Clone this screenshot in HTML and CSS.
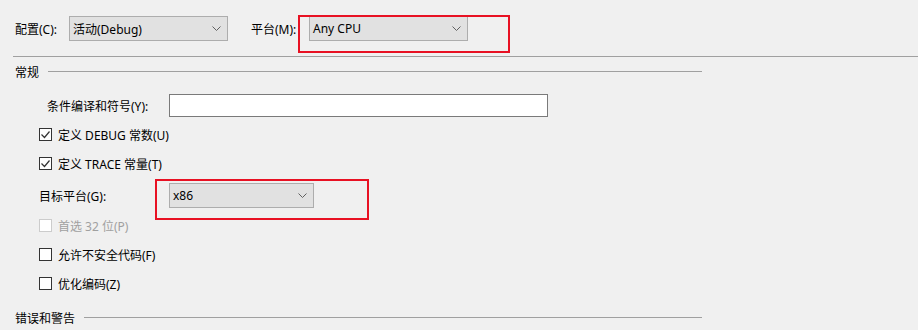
FILE: index.html
```html
<!DOCTYPE html>
<html lang="zh-CN">

<head>
    <meta charset="UTF-8">
    <title>生成</title>
    <link rel="stylesheet" href="styles.css">
</head>

<body>
    <div class="toolbar">
        <span class="label">配置(C):</span>
        <div class="combo combo-config">
            <span>活动(Debug)</span>
            <svg class="chev" width="9" height="5" viewBox="0 0 9 5"><polyline points="0.5,0.5 4.5,4.5 8.5,0.5" /></svg>
        </div>
        <span class="label label-platform">平台(M):</span>
        <div class="combo combo-platform">
            <span>Any CPU</span>
            <svg class="chev" width="9" height="5" viewBox="0 0 9 5"><polyline points="0.5,0.5 4.5,4.5 8.5,0.5" /></svg>
            <div class="mark mark-top"></div>
        </div>
    </div>

    <div class="sep"></div>

    <div class="page">
        <div class="group-title first"><span>常规</span></div>

        <div class="row row-text">
            <span class="field-label">条件编译和符号(Y):</span>
            <div class="textbox"></div>
        </div>

        <div class="row check cb1">
            <span class="box"><svg width="11" height="11" viewBox="0 0 11 11"><polyline points="1.5,5.5 4.5,8.5 9.5,2.5" /></svg></span>
            <span>定义 DEBUG 常数(U)</span>
        </div>

        <div class="row check cb2">
            <span class="box"><svg width="11" height="11" viewBox="0 0 11 11"><polyline points="1.5,5.5 4.5,8.5 9.5,2.5" /></svg></span>
            <span>定义 TRACE 常量(T)</span>
        </div>

        <div class="row row-target">
            <span class="target-label">目标平台(G):</span>
            <div class="combo combo-target">
                <span>x86</span>
                <svg class="chev" width="9" height="5" viewBox="0 0 9 5"><polyline points="0.5,0.5 4.5,4.5 8.5,0.5" /></svg>
                <div class="mark mark-target"></div>
            </div>
        </div>

        <div class="row check disabled cb3">
            <span class="box"></span>
            <span>首选 32 位(P)</span>
        </div>

        <div class="row check cb4">
            <span class="box"></span>
            <span>允许不安全代码(F)</span>
        </div>

        <div class="row check cb4">
            <span class="box"></span>
            <span>优化编码(Z)</span>
        </div>

        <div class="group-title last"><span>错误和警告</span></div>
    </div>
</body>

</html>
```

FILE: styles.css
```css
body {
    margin: 0;
    padding-top: 16px;
    background-color: #f0f0f0;
    color: #000;
    font-family: "Noto Sans", "Noto Sans CJK SC", sans-serif;
    font-size: 12px;
    overflow: hidden;
}

.toolbar {
    display: flex;
    align-items: center;
    height: 25px;
    padding-left: 15px;
}

.label {
    width: 54px;
}

.label-platform {
    margin-left: 23px;
    width: 58px;
}

.combo {
    position: relative;
    display: flex;
    align-items: center;
    justify-content: space-between;
    box-sizing: border-box;
    height: 25px;
    padding: 0 6px 0 3px;
    background-color: #e1e1e1;
    border: 1px solid #adadad;
}

.combo-config {
    width: 159px;
}

.combo-platform {
    width: 159px;
}

.combo-target {
    width: 145px;
}

.chev {
    fill: none;
    stroke: #606060;
    stroke-width: 1;
}

/* red annotation frames drawn over the screenshot */
.mark {
    position: absolute;
    border: 2px solid #e81123;
    box-sizing: border-box;
}

.mark-top {
    left: -12px;
    top: -2px;
    width: 212px;
    height: 38px;
}

.mark-target {
    left: -15px;
    top: -5px;
    width: 214px;
    height: 41px;
}

.sep {
    margin: 15px 0 0 13px;
    height: 1px;
    background-color: #a0a0a0;
}

.page {
    width: 702px;
    padding-left: 15px;
    box-sizing: border-box;
}

.group-title {
    display: flex;
    align-items: center;
    height: 17px;
}

.group-title::after {
    content: "";
    flex: 1;
    height: 1px;
    background-color: #a0a0a0;
    margin-left: 9px;
}

.group-title.first {
    margin-top: 6px;
}

.group-title.last {
    margin-top: 17px;
}

.row {
    display: flex;
    align-items: center;
}

.row-text {
    margin-top: 14px;
    height: 23px;
}

.field-label {
    margin-left: 32px;
    width: 122px;
}

.textbox {
    box-sizing: border-box;
    width: 379px;
    height: 23px;
    background-color: #fff;
    border: 1px solid #7a7a7a;
}

.check {
    height: 17px;
    padding-left: 24px;
}

.check .box {
    display: flex;
    align-items: center;
    justify-content: center;
    box-sizing: border-box;
    width: 13px;
    height: 13px;
    margin-right: 6px;
    background-color: #fff;
    border: 1px solid #333;
}

.check .box svg {
    fill: none;
    stroke: #333;
    stroke-width: 1.2;
}

.cb1 {
    margin-top: 9px;
}

.cb2 {
    margin-top: 12px;
}

.cb3 {
    margin-top: 9px;
}

.cb4 {
    margin-top: 12px;
}

.disabled {
    color: #a0a0a0;
}

.disabled .box {
    border-color: #cccccc;
}

.row-target {
    margin-top: 11px;
    height: 25px;
}

.target-label {
    margin-left: 24px;
    width: 130px;
}
```
